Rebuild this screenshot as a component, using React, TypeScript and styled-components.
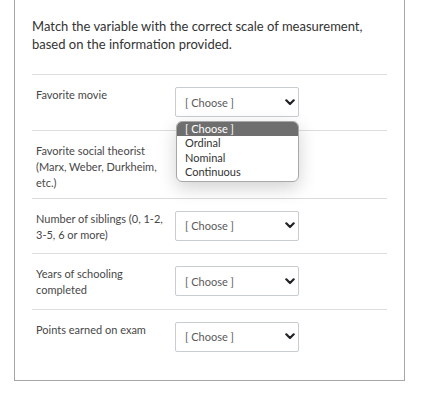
import React from 'react';
import styled, { createGlobalStyle } from 'styled-components';

const GlobalStyle = createGlobalStyle`
  html, body {
    margin: 0;
    padding: 0;
    background: #ffffff;
    font-family: Lato, "Open Sans", sans-serif;
  }
`;

type Item = { label: string; open?: boolean; covered?: boolean };

const items: Item[] = [
  { label: 'Favorite movie', open: true },
  { label: 'Favorite social theorist (Marx, Weber, Durkheim, etc.)', covered: true },
  { label: 'Number of siblings (0, 1-2, 3-5, 6 or more)' },
  { label: 'Years of schooling completed' },
  { label: 'Points earned on exam' },
];

const options = ['[ Choose ]', 'Ordinal', 'Nominal', 'Continuous'];

const Chevron = () => (
  <svg width="10" height="7" viewBox="0 0 10 7">
    <polyline points="1.3,1.3 5,5 8.7,1.3" fill="none" stroke="#222" strokeWidth="2.2" strokeLinecap="round" strokeLinejoin="round" />
  </svg>
);

export default function App() {
  return (
    <>
      <GlobalStyle />
      <Panel>
        <Question>
          Match the variable with the correct scale of measurement, based on the information provided.
        </Question>
        <List>
          {items.map((item) => (
            <Row key={item.label}>
              <Label>{item.label}</Label>
              {/* the open menu of the first row hides the second row's select */}
              {!item.covered && (
                <SelectWrap>
                  <Select>
                    <span>[ Choose ]</span>
                    <Chevron />
                  </Select>
                  {item.open && (
                    <Menu>
                      {options.map((o, i) => (
                        <Option key={o} $active={i === 0}>{o}</Option>
                      ))}
                    </Menu>
                  )}
                </SelectWrap>
              )}
            </Row>
          ))}
        </List>
      </Panel>
    </>
  );
}

const Panel = styled.div`
  box-sizing: border-box;
  margin-left: 14px;
  width: 391px;
  border: 1px solid #a6a6a6;
  border-top: none;
  padding: 17px 17px 16px;
`;

const Question = styled.p`
  margin: 0 0 21px;
  font-size: 13px;
  line-height: 18px;
  color: #333;
`;

const List = styled.div`
  display: flex;
  flex-direction: column;
`;

const Row = styled.div`
  display: flex;
  align-items: flex-start;
  border-top: 1px solid #dcdcdc;
  padding: 12px 0 7px 4px;
`;

const Label = styled.div`
  width: 136px;
  margin-right: 3px;
  font-size: 11px;
  line-height: 16px;
  color: #474747;
`;

const SelectWrap = styled.div`
  position: relative;
  margin-bottom: 5.5px;
`;

const Select = styled.div`
  box-sizing: border-box;
  width: 124px;
  height: 30px;
  border: 1px solid #c7cdd1;
  border-radius: 2px;
  display: flex;
  align-items: center;
  justify-content: space-between;
  padding: 0 3px 0 9px;
  font-size: 11px;
  color: #5a5a5a;
  background: #fff;
`;

const Menu = styled.div`
  position: absolute;
  left: 1px;
  top: 34px;
  width: 123px;
  box-sizing: border-box;
  background: #fff;
  border: 1px solid #a8a8a8;
  border-radius: 6px;
  overflow: hidden;
  box-shadow: 0 6px 18px rgba(0, 0, 0, 0.18);
  padding-bottom: 2px;
  z-index: 2;
`;

const Option = styled.div<{ $active?: boolean }>`
  font-size: 11px;
  line-height: 14.3px;
  padding: 0 8px;
  color: ${(p) => (p.$active ? '#fff' : '#333')};
  background: ${(p) => (p.$active ? '#6e6e6e' : 'transparent')};
`;
